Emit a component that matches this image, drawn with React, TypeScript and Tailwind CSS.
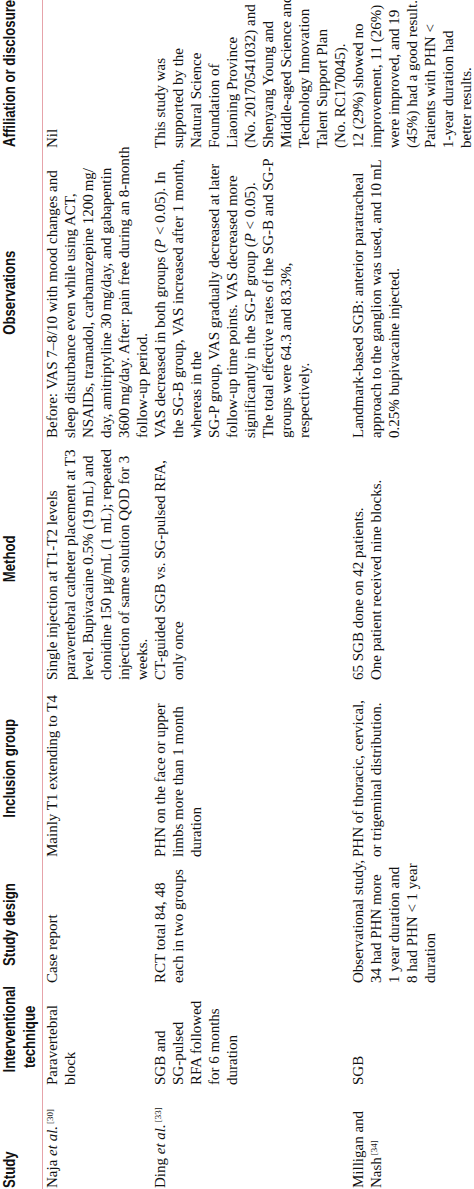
import React from "react";

type Cell = React.ReactNode[];

const serif = { fontFamily: '"Liberation Serif", "Times New Roman", serif' };

function Lines({ lines, className = "" }: { lines: Cell; className?: string }) {
  return (
    <div className={"text-[15px] leading-[18px] text-[#111] " + className} style={serif}>
      {lines.map((l, i) => (
        <div key={i} className="whitespace-nowrap">
          {l}
        </div>
      ))}
    </div>
  );
}

const Sup = ({ children }: { children: React.ReactNode }) => (
  <sup className="text-[9px] ml-[2px]">{children}</sup>
);

const P = () => <i>P</i>;

const rows: Cell[][] = [
  [
    [<>Naja <i>et al.</i><Sup>[30]</Sup></>],
    ["Paravertebral", "block"],
    ["Case report"],
    ["Mainly T1 extending to T4"],
    [
      "Single injection at T1-T2 levels",
      "paravertebral catheter placement at T3",
      "level. Bupivacaine 0.5% (19\u2009mL) and",
      "clonidine 150 \u00b5g/mL (1 mL); repeated",
      "injection of same solution QOD for 3",
      "weeks.",
    ],
    [
      "Before: VAS 7\u20138/10 with mood changes and",
      "sleep disturbance even while using ACT,",
      "NSAIDs, tramadol, carbamazepine 1200\u2009mg/",
      "day, amitriptyline 30\u2009mg/day, and gabapentin",
      "3600\u2009mg/day. After: pain free during an 8-month",
      "follow-up period.",
    ],
    ["Nil"],
  ],
  [
    [<>Ding <i>et al.</i><Sup>[33]</Sup></>],
    ["SGB and", "SG-pulsed", "RFA followed", "for 6 months", "duration"],
    ["RCT total 84, 48", "each in two groups"],
    ["PHN on the face or upper", "limbs more than 1 month", "duration"],
    ["CT-guided SGB vs. SG-pulsed RFA,", "only once"],
    [
      <>VAS decreased in both groups (<P /> &lt; 0.05). In</>,
      "the SG-B group, VAS increased after 1 month,",
      "whereas in the",
      "SG-P group, VAS gradually decreased at later",
      "follow-up time points. VAS decreased more",
      <>significantly in the SG-P group (<P /> &lt; 0.05).</>,
      "The total effective rates of the SG-B and SG-P",
      "groups were 64.3 and 83.3%,",
      "respectively.",
    ],
    [
      "This study was",
      "supported by the",
      "Natural Science",
      "Foundation of",
      "Liaoning Province",
      "(No. 20170541032) and",
      "Shenyang Young and",
      "Middle-aged Science and",
      "Technology Innovation",
      "Talent Support Plan",
      "(No. RC170045).",
    ],
  ],
  [
    ["Milligan and", <>Nash<Sup>[34]</Sup></>],
    ["SGB"],
    ["Observational study,", "34 had PHN more", "1 year duration and", "8 had PHN < 1 year", "duration"],
    ["PHN of thoracic, cervical,", "or trigeminal distribution."],
    ["65 SGB done on 42 patients.", "One patient received nine blocks."],
    [
      "Landmark-based SGB: anterior paratracheal",
      "approach to the ganglion was used, and 10\u2009mL",
      "0.25% bupivacaine injected.",
    ],
    [
      "12 (29%) showed no",
      "improvement, 11 (26%)",
      "were improved, and 19",
      "(45%) had a good result.",
      "Patients with PHN <",
      "1-year duration had",
      "better results.",
    ],
  ],
];

const headers: { lines: string[]; cls: string; inner: string }[] = [
  { lines: ["Study"], cls: "text-left pl-px", inner: "origin-left" },
  { lines: ["Interventional", "technique"], cls: "text-center pr-[6px]", inner: "origin-center" },
  { lines: ["Study design"], cls: "text-center pr-[10px]", inner: "origin-center" },
  { lines: ["Inclusion group"], cls: "text-center", inner: "origin-center" },
  { lines: ["Method"], cls: "text-center", inner: "origin-center" },
  { lines: ["Observations"], cls: "text-center", inner: "origin-center" },
  { lines: ["Affiliation or disclosure"], cls: "text-left pl-px", inner: "origin-left" },
];

export default function App() {
  return (
    <div className="w-[474px] h-[1189px] overflow-hidden bg-white">
      <div className="w-[1189px] h-[474px] origin-top-left -rotate-90 translate-y-[1189px]">
        <div className="grid grid-cols-[104px_102px_126px_177px_242px_290px_160px]">
          {headers.map((h, i) => (
            <div
              key={i}
              className={"h-[42px] text-[17px] leading-[20px] font-bold text-[#111] " + h.cls}
              style={{ fontFamily: '"Liberation Sans", Arial, sans-serif' }}
            >
              {h.lines.map((l, j) => (
                <div key={j} className="whitespace-nowrap">
                  <span className={"inline-block scale-x-[0.775] " + h.inner}>{l}</span>
                </div>
              ))}
            </div>
          ))}
          <div className="col-span-7 h-px bg-[#e6a3aa]" />
          {rows.map((r, ri) =>
            r.map((c, ci) => (
              <div key={ri + "-" + ci} className={ci === 0 ? "pl-px" : ""}>
                <Lines lines={c} />
              </div>
            ))
          )}
        </div>
      </div>
    </div>
  );
}
